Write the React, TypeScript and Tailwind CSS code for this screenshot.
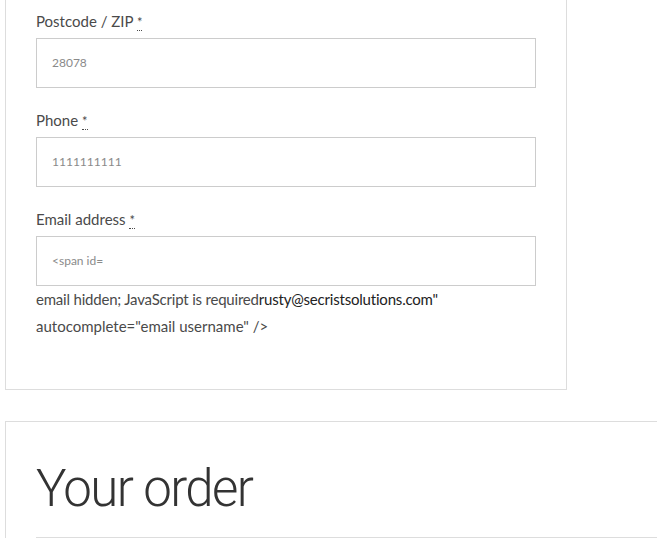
import React from "react";

const body = { fontFamily: "Lato, 'Noto Sans', sans-serif" };

function Field({ label, value }: { label: string; value: string }) {
  return (
    <div className="mb-[19px]">
      <label className="block text-[15px] leading-[27px] mb-[3px] text-[#4a4a4a]">
        {label}{" "}
        <abbr className="no-underline border-b border-dotted border-[#4a4a4a] text-[13px] leading-none">*</abbr>
      </label>
      <div className="h-[50px] w-[500px] border border-[#cccccc] bg-white flex items-center pl-[15px] text-[12px] text-[#8a8a8a]">
        {value}
      </div>
    </div>
  );
}

export default function App() {
  return (
    <div className="w-[657px] h-[558px] overflow-hidden bg-white" style={body}>
      <div className="ml-[5px] w-[562px] border-x border-b border-[#dddddd] pt-[8px] px-[30px] pb-[49px]">
        <Field label="Postcode / ZIP" value="28078" />
        <Field label="Phone" value="1111111111" />
        <div>
          <label className="block text-[15px] leading-[27px] mb-[3px] text-[#4a4a4a]">
            Email address{" "}
            <abbr className="no-underline border-b border-dotted border-[#4a4a4a] text-[13px] leading-none">*</abbr>
          </label>
          <div className="h-[50px] w-[500px] border border-[#cccccc] bg-white flex items-center pl-[15px] text-[12px] text-[#8a8a8a]">
            &lt;span id=
          </div>
          <p className="text-[15px] leading-[27px] text-[#4a4a4a]">
            <span className="tracking-[-0.2px]">
              email hidden; JavaScript is required<span className="text-[#222222]">rusty@secristsolutions.com"</span>
            </span>
            <br />
            autocomplete="email username" /&gt;
          </p>
        </div>
      </div>
      <div className="mt-[31px] ml-[5px] w-[720px] border-t border-l border-[#dddddd] pt-[36px] pl-[30px]">
        <h2
          className="text-[51px] leading-[62px] font-light text-[#333333] tracking-[-1.6px]"
          style={{ fontFamily: "Roboto, sans-serif" }}
        >
          Your order
        </h2>
        <div className="mt-[17px] border-t border-[#dddddd]" />
      </div>
    </div>
  );
}
